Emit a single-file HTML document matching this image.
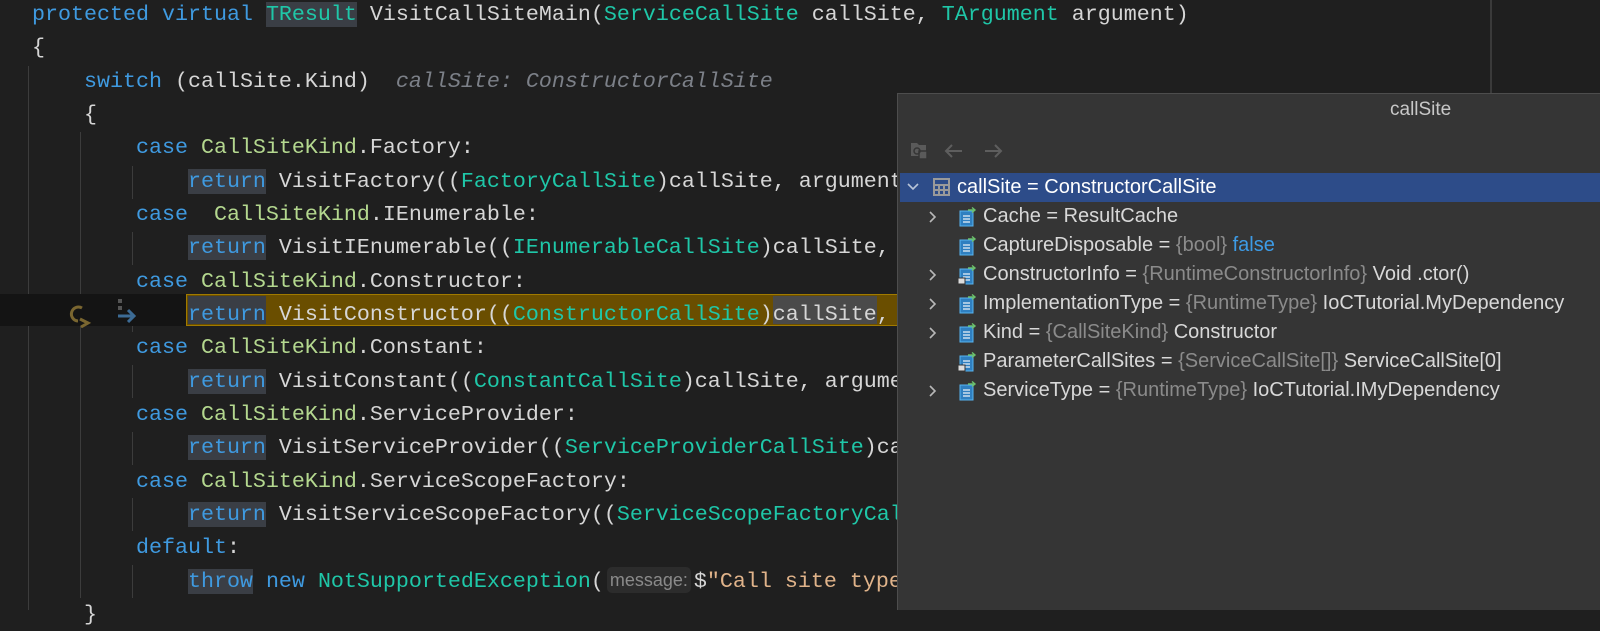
<!DOCTYPE html>
<html><head><meta charset="utf-8"><style>
*{margin:0;padding:0;box-sizing:border-box}
body{width:1600px;height:610px;background:#1f1f1f;overflow:hidden;position:relative;font-family:"Liberation Mono",monospace}
.l{position:absolute;left:32px;height:33.3px;line-height:33.3px;font-size:21.67px;color:#d6d6d6;white-space:pre}
.k{color:#3f9ae0}
.t{color:#1fc7a8}
.e{color:#b4d88f}
.bx{background:#3a3e45}
.g{position:absolute;width:1px;background:#3c3c3c}
.hint{color:#7c8088;font-style:italic}
#panel{position:absolute;left:897px;top:93px;width:703px;height:517px;background:#353535;border-left:1px solid #4d4d4d;border-top:1px solid #4d4d4d;font-family:"Liberation Sans",sans-serif;color:#d8d8d8}
.r{position:absolute;left:0;right:0;height:29px;font-size:20px;white-space:pre}
.r .c{position:absolute;left:30px;top:8px}
.r .ic{position:absolute;left:60px;top:5px}
.r .tx{position:absolute;left:85px;top:0;line-height:29px}
.gy{color:#8b8b8b}
.bl{color:#3d9be6}
</style></head><body>
<div class="g" style="left:28px;top:66px;height:544px"></div>
<div class="g" style="left:80px;top:132px;height:466px"></div>
<div class="g" style="left:132px;top:166px;height:33px"></div>
<div class="g" style="left:132px;top:232px;height:33px"></div>
<div class="g" style="left:132px;top:299px;height:33px"></div>
<div class="g" style="left:132px;top:365px;height:33px"></div>
<div class="g" style="left:132px;top:432px;height:33px"></div>
<div class="g" style="left:132px;top:498px;height:33px"></div>
<div class="g" style="left:132px;top:565px;height:33px"></div>
<div style="position:absolute;left:1490px;top:0;width:2px;height:93px;background:#3a3a3a"></div>
<div style="position:absolute;left:0;top:294px;width:900px;height:32px;background:#141414"></div>
<div style="position:absolute;left:186px;top:294px;width:720px;height:32px;background:#6a4e00;border:1px solid #a07a00"></div>
<div style="position:absolute;left:188px;top:296px;width:78px;height:28px;background:#3a3e45"></div>
<div style="position:absolute;left:773px;top:296px;width:104px;height:28px;background:#4a4a4a"></div>
<svg style="position:absolute;left:66px;top:302px" width="30" height="26" viewBox="0 0 30 26"><path d="M12 19 A7 7 0 1 1 16 6" fill="none" stroke="#7a6630" stroke-width="3"/><path d="M14 17 L22 21 L15 25" fill="none" stroke="#7a6630" stroke-width="3"/></svg>
<div style="position:absolute;left:118px;top:299px;width:4px;height:4px;background:#555"></div>
<div style="position:absolute;left:118px;top:306px;width:4px;height:4px;background:#555"></div>
<svg style="position:absolute;left:116px;top:308px" width="22" height="16" viewBox="0 0 22 16"><path d="M2 8 H18 M12 2 L18 8 L12 14" fill="none" stroke="#3c6b95" stroke-width="3"/></svg>

<div class="l" style="top:-2px"><span class="k">protected virtual</span> <span class="t bx">TResult</span> VisitCallSiteMain(<span class="t">ServiceCallSite</span> callSite, <span class="t">TArgument</span> argument)</div>
<div class="l" style="top:31px">{</div>
<div class="l" style="top:65px">    <span class="k">switch</span> (callSite.Kind)  <span class="hint">callSite: ConstructorCallSite</span></div>
<div class="l" style="top:98px">    {</div>
<div class="l" style="top:131px">        <span class="k">case</span> <span class="e">CallSiteKind</span>.Factory:</div>
<div class="l" style="top:165px">            <span class="k bx">return</span> VisitFactory((<span class="t">FactoryCallSite</span>)callSite, argument);</div>
<div class="l" style="top:198px">        <span class="k">case</span>  <span class="e">CallSiteKind</span>.IEnumerable:</div>
<div class="l" style="top:231px">            <span class="k bx">return</span> VisitIEnumerable((<span class="t">IEnumerableCallSite</span>)callSite, argument);</div>
<div class="l" style="top:265px">        <span class="k">case</span> <span class="e">CallSiteKind</span>.Constructor:</div>
<div class="l" style="top:298px">            <span class="k">return</span> VisitConstructor((<span class="t">ConstructorCallSite</span>)callSite, argument);</div>
<div class="l" style="top:331px">        <span class="k">case</span> <span class="e">CallSiteKind</span>.Constant:</div>
<div class="l" style="top:365px">            <span class="k bx">return</span> VisitConstant((<span class="t">ConstantCallSite</span>)callSite, argument);</div>
<div class="l" style="top:398px">        <span class="k">case</span> <span class="e">CallSiteKind</span>.ServiceProvider:</div>
<div class="l" style="top:431px">            <span class="k bx">return</span> VisitServiceProvider((<span class="t">ServiceProviderCallSite</span>)callSite, argument);</div>
<div class="l" style="top:465px">        <span class="k">case</span> <span class="e">CallSiteKind</span>.ServiceScopeFactory:</div>
<div class="l" style="top:498px">            <span class="k bx">return</span> VisitServiceScopeFactory((<span class="t">ServiceScopeFactoryCallSite</span>)callSite, argument);</div>
<div class="l" style="top:531px">        <span class="k">default</span>:</div>
<div class="l" style="top:565px">            <span class="k bx">throw</span> <span class="k">new</span> <span class="t">NotSupportedException</span>(<span style="display:inline-block;background:#2c2c2c;border-radius:5px;color:#8a8a8a;font-family:'Liberation Sans',sans-serif;font-size:18px;line-height:26px;padding:0 3px;margin:0 3px;vertical-align:1px">message:</span>$<span style="color:#e0b38a">"Call site type</span></div>
<div class="l" style="top:598px">    }</div>

<div id="panel">
  <div style="position:absolute;left:492px;top:5px;font-size:19px;color:#c8c8c8">callSite</div>
  <svg style="position:absolute;left:12px;top:46px" width="110" height="22" viewBox="0 0 110 22">
    <path d="M1 3 H7 L9 5 H16 V16 H1 Z" fill="#5a5a5a"/><rect x="9" y="11" width="8" height="8" fill="#5a5a5a" stroke="#353535" stroke-width="1.5"/><circle cx="7" cy="11" r="3" fill="none" stroke="#353535" stroke-width="1.5"/>
    <path d="M36 11 H52 M42 5 L36 11 L42 17" fill="none" stroke="#5e5e5e" stroke-width="2"/>
    <path d="M75 11 H91 M85 5 L91 11 L85 17" fill="none" stroke="#5e5e5e" stroke-width="2"/>
  </svg>
  <div class="r" style="top:79px;left:2px;background:#2d4c89;color:#fff">
    <svg class="c" style="left:6px;top:9px" width="14" height="10" viewBox="0 0 14 10"><path d="M2 2 L7 7 L12 2" fill="none" stroke="#b8c4d8" stroke-width="1.6"/></svg>
    <svg class="ic" style="left:32px;top:4px" width="20" height="20" viewBox="0 0 20 20"><rect x="1" y="1" width="17" height="18" fill="#9a9a9a"/><rect x="3" y="3" width="13" height="4" fill="#2d4c89"/><g fill="#2d4c89"><rect x="3" y="9" width="3" height="3"/><rect x="8" y="9" width="3" height="3"/><rect x="13" y="9" width="3" height="3"/><rect x="3" y="14" width="3" height="3"/><rect x="8" y="14" width="3" height="3"/><rect x="13" y="14" width="3" height="3"/></g></svg>
    <span class="tx" style="left:57px">callSite = ConstructorCallSite</span></div>
  <div class="r" style="top:108px"><svg class="c" width="10" height="14" viewBox="0 0 10 14"><path d="M2 2 L7 7 L2 12" fill="none" stroke="#b8b8b8" stroke-width="1.6"/></svg><svg class="ic" width="20" height="20" viewBox="0 0 20 20"><rect x="2" y="4" width="13" height="15" fill="#2f7fc0" stroke="#57b4f0"/><g stroke="#cde" stroke-width="1.4"><path d="M5 9H12M5 12H12M5 15H12"/></g><path d="M10 3 H17 M14 0.5 L17 3 L14 5.5" fill="none" stroke="#6bc06b" stroke-width="1.4"/></svg><span class="tx">Cache = ResultCache</span></div>
  <div class="r" style="top:137px"><svg class="ic" width="20" height="20" viewBox="0 0 20 20"><rect x="2" y="4" width="13" height="15" fill="#2f7fc0" stroke="#57b4f0"/><g stroke="#cde" stroke-width="1.4"><path d="M5 9H12M5 12H12M5 15H12"/></g><path d="M10 3 H17 M14 0.5 L17 3 L14 5.5" fill="none" stroke="#6bc06b" stroke-width="1.4"/></svg><span class="tx">CaptureDisposable = <span class="gy">{bool}</span> <span class="bl">false</span></span></div>
  <div class="r" style="top:166px"><svg class="c" width="10" height="14" viewBox="0 0 10 14"><path d="M2 2 L7 7 L2 12" fill="none" stroke="#b8b8b8" stroke-width="1.6"/></svg><svg class="ic" width="20" height="20" viewBox="0 0 20 20"><rect x="2" y="4" width="13" height="15" fill="#2f7fc0" stroke="#57b4f0"/><g stroke="#cde" stroke-width="1.4"><path d="M5 9H12M5 12H12M5 15H12"/></g><path d="M10 3 H17 M14 0.5 L17 3 L14 5.5" fill="none" stroke="#6bc06b" stroke-width="1.4"/><rect x="0" y="13" width="7" height="6" fill="#ddd" stroke="#333"/></svg><span class="tx">ConstructorInfo = <span class="gy">{RuntimeConstructorInfo}</span> Void .ctor()</span></div>
  <div class="r" style="top:195px"><svg class="c" width="10" height="14" viewBox="0 0 10 14"><path d="M2 2 L7 7 L2 12" fill="none" stroke="#b8b8b8" stroke-width="1.6"/></svg><svg class="ic" width="20" height="20" viewBox="0 0 20 20"><rect x="2" y="4" width="13" height="15" fill="#2f7fc0" stroke="#57b4f0"/><g stroke="#cde" stroke-width="1.4"><path d="M5 9H12M5 12H12M5 15H12"/></g><path d="M10 3 H17 M14 0.5 L17 3 L14 5.5" fill="none" stroke="#6bc06b" stroke-width="1.4"/></svg><span class="tx">ImplementationType = <span class="gy">{RuntimeType}</span> IoCTutorial.MyDependency</span></div>
  <div class="r" style="top:224px"><svg class="c" width="10" height="14" viewBox="0 0 10 14"><path d="M2 2 L7 7 L2 12" fill="none" stroke="#b8b8b8" stroke-width="1.6"/></svg><svg class="ic" width="20" height="20" viewBox="0 0 20 20"><rect x="2" y="4" width="13" height="15" fill="#2f7fc0" stroke="#57b4f0"/><g stroke="#cde" stroke-width="1.4"><path d="M5 9H12M5 12H12M5 15H12"/></g><path d="M10 3 H17 M14 0.5 L17 3 L14 5.5" fill="none" stroke="#6bc06b" stroke-width="1.4"/></svg><span class="tx">Kind = <span class="gy">{CallSiteKind}</span> Constructor</span></div>
  <div class="r" style="top:253px"><svg class="ic" width="20" height="20" viewBox="0 0 20 20"><rect x="2" y="4" width="13" height="15" fill="#2f7fc0" stroke="#57b4f0"/><g stroke="#cde" stroke-width="1.4"><path d="M5 9H12M5 12H12M5 15H12"/></g><path d="M10 3 H17 M14 0.5 L17 3 L14 5.5" fill="none" stroke="#6bc06b" stroke-width="1.4"/><rect x="0" y="13" width="7" height="6" fill="#ddd" stroke="#333"/></svg><span class="tx">ParameterCallSites = <span class="gy">{ServiceCallSite[]}</span> ServiceCallSite[0]</span></div>
  <div class="r" style="top:282px"><svg class="c" width="10" height="14" viewBox="0 0 10 14"><path d="M2 2 L7 7 L2 12" fill="none" stroke="#b8b8b8" stroke-width="1.6"/></svg><svg class="ic" width="20" height="20" viewBox="0 0 20 20"><rect x="2" y="4" width="13" height="15" fill="#2f7fc0" stroke="#57b4f0"/><g stroke="#cde" stroke-width="1.4"><path d="M5 9H12M5 12H12M5 15H12"/></g><path d="M10 3 H17 M14 0.5 L17 3 L14 5.5" fill="none" stroke="#6bc06b" stroke-width="1.4"/></svg><span class="tx">ServiceType = <span class="gy">{RuntimeType}</span> IoCTutorial.IMyDependency</span></div>
</div>
</body></html>
